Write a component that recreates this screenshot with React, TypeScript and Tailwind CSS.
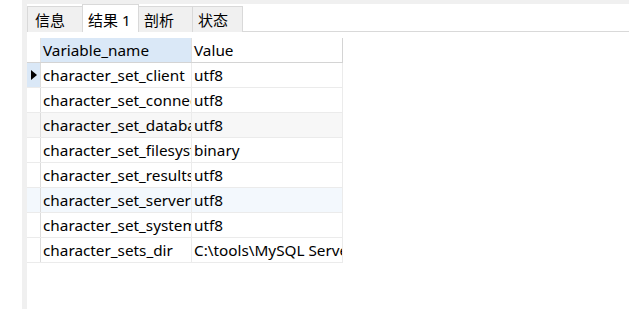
import React from "react";

const rows: { name: string; value: string; bg: string }[] = [
  { name: "character_set_client", value: "utf8", bg: "bg-white" },
  { name: "character_set_connection", value: "utf8", bg: "bg-white" },
  { name: "character_set_database", value: "utf8", bg: "bg-[#f7f7f7]" },
  { name: "character_set_filesystem", value: "binary", bg: "bg-white" },
  { name: "character_set_results", value: "utf8", bg: "bg-white" },
  { name: "character_set_server", value: "utf8", bg: "bg-[#f3f8fd]" },
  { name: "character_set_system", value: "utf8", bg: "bg-white" },
  { name: "character_sets_dir", value: "C:\\tools\\MySQL Server 5.7\\share\\charsets\\", bg: "bg-white" },
];

export default function App() {
  return (
    <div
      className="w-[629px] h-[309px] bg-white flex overflow-hidden text-black"
      style={{ fontFamily: '"Noto Sans", "Noto Sans CJK SC", sans-serif' }}
    >
      <div className="w-[22px] shrink-0 bg-white" />
      <div className="flex-1 bg-[#f0f0f0] pt-[4px] pl-[5px] flex flex-col">
        <div className="flex-1 bg-white flex flex-col">
          {/* tabs */}
          <div className="h-[28px] flex items-end border-b border-[#d9d9d9] bg-white">
            <div className="w-[55px] h-[26px] bg-[#f0f0f0] border-l border-t border-[#d9d9d9] pl-[7px] flex items-center text-[15px] leading-none pt-[2px] mb-[-1px] box-border">
              信息
            </div>
            <div className="w-[57px] h-[28px] bg-white border-l border-t border-r border-[#d9d9d9] pl-[5px] flex items-center text-[15px] leading-none pt-[3px] mb-[-1px] box-border">
              结果 1
            </div>
            <div className="w-[53px] h-[26px] bg-[#f0f0f0] border-t border-[#d9d9d9] pl-[5px] flex items-center text-[15px] leading-none pt-[2px] mb-[-1px] box-border">
              剖析
            </div>
            <div className="w-[51px] h-[26px] bg-[#f0f0f0] border-l border-t border-r border-[#d9d9d9] pl-[5px] flex items-center text-[15px] leading-none pt-[2px] mb-[-1px] box-border">
              状态
            </div>
          </div>
          {/* grid */}
          <div className="mt-[6px] flex flex-col w-[316px] text-[15.3px]">
            <div className="flex h-[25px] border-b border-[#d4d4d4]">
              <div className="w-[14px] shrink-0 bg-white border-r border-[#e4e4e4]" />
              <div className="w-[151px] shrink-0 bg-[#dae8f7] border-r border-[#e0e0e0] pl-[2px] flex items-center whitespace-nowrap overflow-hidden">
                Variable_name
              </div>
              <div className="w-[151px] shrink-0 bg-white border-r border-[#d4d4d4] pl-[2px] flex items-center whitespace-nowrap overflow-hidden">
                Value
              </div>
            </div>
            {rows.map((r, i) => (
              <div key={r.name} className={`flex h-[25px] border-b border-[#ebebeb] ${r.bg}`}>
                <div
                  className={`w-[14px] shrink-0 border-r border-[#dcdcdc] flex items-center justify-center ${
                    i === 0 ? "bg-[#dae8f7]" : ""
                  }`}
                >
                  {i === 0 && (
                    <svg width="6" height="10" viewBox="0 0 6 10">
                      <path d="M0 0 L6 5 L0 10 Z" fill="#000" />
                    </svg>
                  )}
                </div>
                <div className="w-[151px] shrink-0 border-r border-[#ebebeb] pl-[2px] flex items-center whitespace-nowrap overflow-hidden">
                  {r.name}
                </div>
                <div className="w-[151px] shrink-0 border-r border-[#ebebeb] pl-[2px] flex items-center whitespace-nowrap overflow-hidden">
                  {r.value}
                </div>
              </div>
            ))}
          </div>
        </div>
      </div>
    </div>
  );
}
